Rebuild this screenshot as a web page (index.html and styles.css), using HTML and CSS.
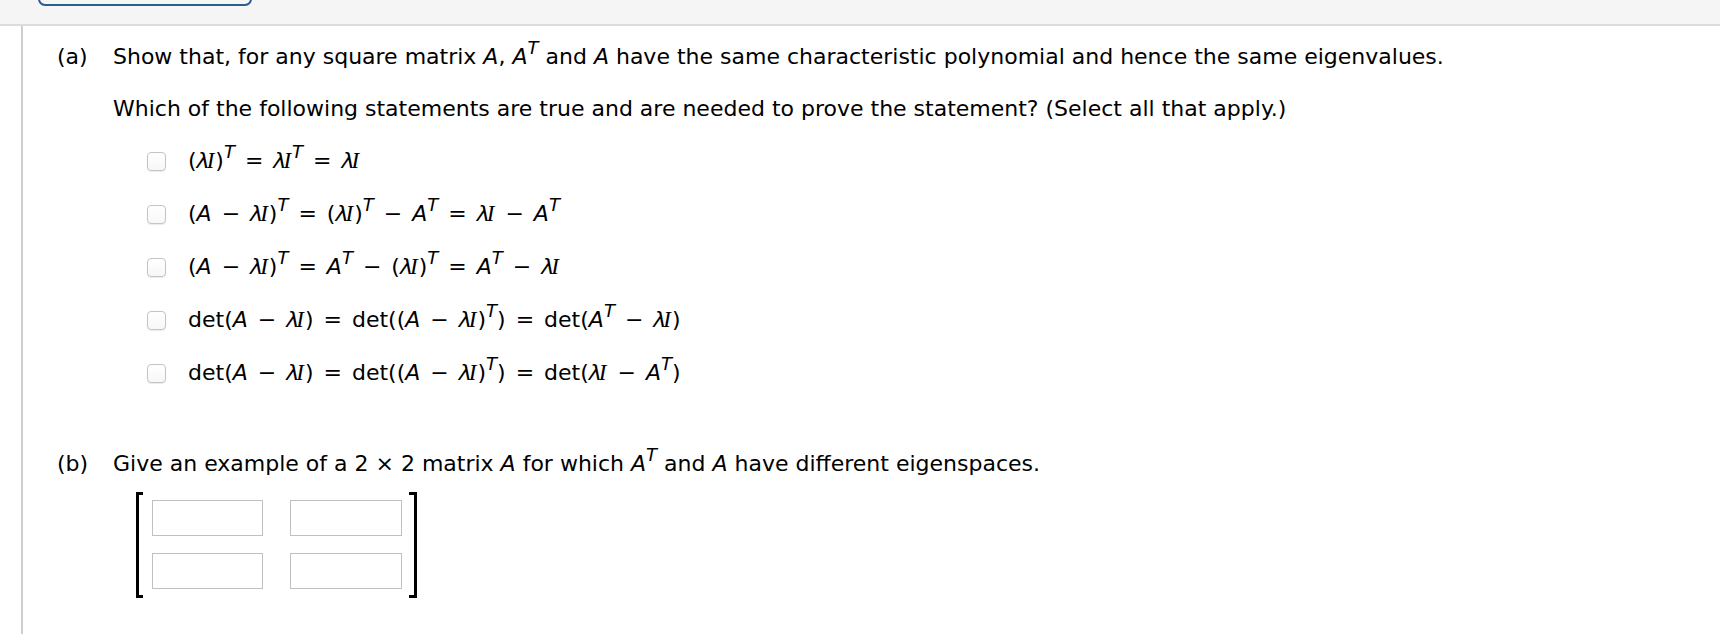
FILE: index.html
```html
<!DOCTYPE html>
<html lang="en">
<head>
<meta charset="utf-8">
<title>Eigenvalues of the transpose</title>
<link rel="stylesheet" href="styles.css">
</head>
<body>
<div class="topbar"><div class="tab"></div></div>
<main class="content">
  <section class="part part-a">
    <div class="label">(a)</div>
    <div class="body">
      <p class="prompt">Show that, for any square matrix <var class="v">A</var>, <var class="v">A</var><sup>T</sup> and <var class="v">A</var> have the same characteristic polynomial and hence the same eigenvalues.</p>
      <p class="prompt">Which of the following statements are true and are needed to prove the statement? (Select all that apply.)</p>
      <ul class="choices">
        <li><input type="checkbox" class="check"><span class="math">(<var class="l">λ</var><var class="i">I</var>)<sup>T</sup><span class="op">=</span><var class="l">λ</var><var class="i">I</var><sup>T</sup><span class="op">=</span><var class="l">λ</var><var class="i">I</var></span></li>
        <li><input type="checkbox" class="check"><span class="math">(<var class="v">A</var><span class="op">−</span><var class="l">λ</var><var class="i">I</var>)<sup>T</sup><span class="op">=</span>(<var class="l">λ</var><var class="i">I</var>)<sup>T</sup><span class="op">−</span><var class="v">A</var><sup>T</sup><span class="op">=</span><var class="l">λ</var><var class="i">I</var><span class="op">−</span><var class="v">A</var><sup>T</sup></span></li>
        <li><input type="checkbox" class="check"><span class="math">(<var class="v">A</var><span class="op">−</span><var class="l">λ</var><var class="i">I</var>)<sup>T</sup><span class="op">=</span><var class="v">A</var><sup>T</sup><span class="op">−</span>(<var class="l">λ</var><var class="i">I</var>)<sup>T</sup><span class="op">=</span><var class="v">A</var><sup>T</sup><span class="op">−</span><var class="l">λ</var><var class="i">I</var></span></li>
        <li><input type="checkbox" class="check"><span class="math">det(<var class="v">A</var><span class="op">−</span><var class="l">λ</var><var class="i">I</var>)<span class="op">=</span>det((<var class="v">A</var><span class="op">−</span><var class="l">λ</var><var class="i">I</var>)<sup>T</sup>)<span class="op">=</span>det(<var class="v">A</var><sup>T</sup><span class="op">−</span><var class="l">λ</var><var class="i">I</var>)</span></li>
        <li><input type="checkbox" class="check"><span class="math">det(<var class="v">A</var><span class="op">−</span><var class="l">λ</var><var class="i">I</var>)<span class="op">=</span>det((<var class="v">A</var><span class="op">−</span><var class="l">λ</var><var class="i">I</var>)<sup>T</sup>)<span class="op">=</span>det(<var class="l">λ</var><var class="i">I</var><span class="op">−</span><var class="v">A</var><sup>T</sup>)</span></li>
      </ul>
    </div>
  </section>
  <section class="part part-b">
    <div class="label">(b)</div>
    <div class="body">
      <p class="prompt">Give an example of a 2 × 2 matrix <var class="v">A</var> for which <var class="v">A</var><sup>T</sup> and <var class="v">A</var> have different eigenspaces.</p>
      <div class="matrix">
        <span class="bracket left"></span>
        <div class="cells">
          <input type="text" class="cell" aria-label="a11">
          <input type="text" class="cell" aria-label="a12">
          <input type="text" class="cell" aria-label="a21">
          <input type="text" class="cell" aria-label="a22">
        </div>
        <span class="bracket right"></span>
      </div>
    </div>
  </section>
</main>
</body>
</html>
```
FILE: styles.css
```css
html, body {
  margin: 0;
  padding: 0;
  background: #fff;
}
body {
  font-family: "DejaVu Sans", Verdana, sans-serif;
  font-size: 22px;
  line-height: 26px;
  color: #000;
  height: 634px;
  overflow: hidden;
  display: flex;
  flex-direction: column;
}
.topbar {
  height: 24px;
  background: #f5f5f5;
  border-bottom: 2px solid #dcdcdc;
  overflow: hidden;
  flex: none;
}
.tab {
  margin-top: -16px;
  margin-left: 38px;
  width: 214px;
  height: 22px;
  box-sizing: border-box;
  border: 2.5px solid #2c5d92;
  border-radius: 7px;
  background: #f5f5f5;
}
.content {
  flex: 1;
  margin-left: 21px;
  border-left: 2px solid #cfcfcf;
  padding-top: 18px;
}
.part {
  display: flex;
  padding-left: 34px;
}
.part-b {
  margin-top: 65px;
}
.label {
  width: 56px;
  flex: none;
}
.body {
  flex: 1;
}
.prompt {
  margin: 0 0 26px;
  white-space: nowrap;
}
.part-b .prompt {
  margin-bottom: 15px;
}
var {
  font-style: italic;
}
var.v, var.l {
  font-family: "DejaVu Sans", Verdana, sans-serif;
}
var.i {
  font-family: "Liberation Serif", "Times New Roman", serif;
  font-size: 23px;
  margin-left: -3px;
  margin-right: 1px;
}
sup {
  font-family: "DejaVu Sans", Verdana, sans-serif;
  font-style: italic;
  font-size: 0.82em;
  line-height: 0;
  position: relative;
  top: -0.55em;
  vertical-align: baseline;
}
.op {
  padding: 0 10px;
}
.choices {
  list-style: none;
  margin: 0;
  padding: 0 0 0 34px;
  display: flex;
  flex-direction: column;
  gap: 27px;
}
.choices li {
  display: flex;
  align-items: center;
  height: 26px;
}
.check {
  appearance: none;
  -webkit-appearance: none;
  margin: 0 22px 0 0;
  width: 19px;
  height: 19px;
  box-sizing: border-box;
  border: 1px solid #c4c4c4;
  border-radius: 4px;
  background: linear-gradient(#fff, #f7f7f7);
  box-shadow: 0 1px 1px rgba(0, 0, 0, 0.08);
  flex: none;
}
.math {
  white-space: nowrap;
}
.matrix {
  display: inline-flex;
  margin-left: 23px;
}
.bracket {
  width: 4px;
  border: 3px solid #000;
}
.bracket.left {
  border-right: none;
}
.bracket.right {
  width: 5px;
  border-left: none;
}
.cells {
  display: grid;
  grid-template-columns: 111px 112px;
  column-gap: 27px;
  row-gap: 17px;
  padding: 8px 7px 9px 9px;
}
.cell {
  margin: 0;
  width: 100%;
  height: 36px;
  box-sizing: border-box;
  border: 1px solid #c0c0c0;
  border-radius: 0;
  background: #fff;
  padding: 0 6px;
  font: inherit;
}
```
